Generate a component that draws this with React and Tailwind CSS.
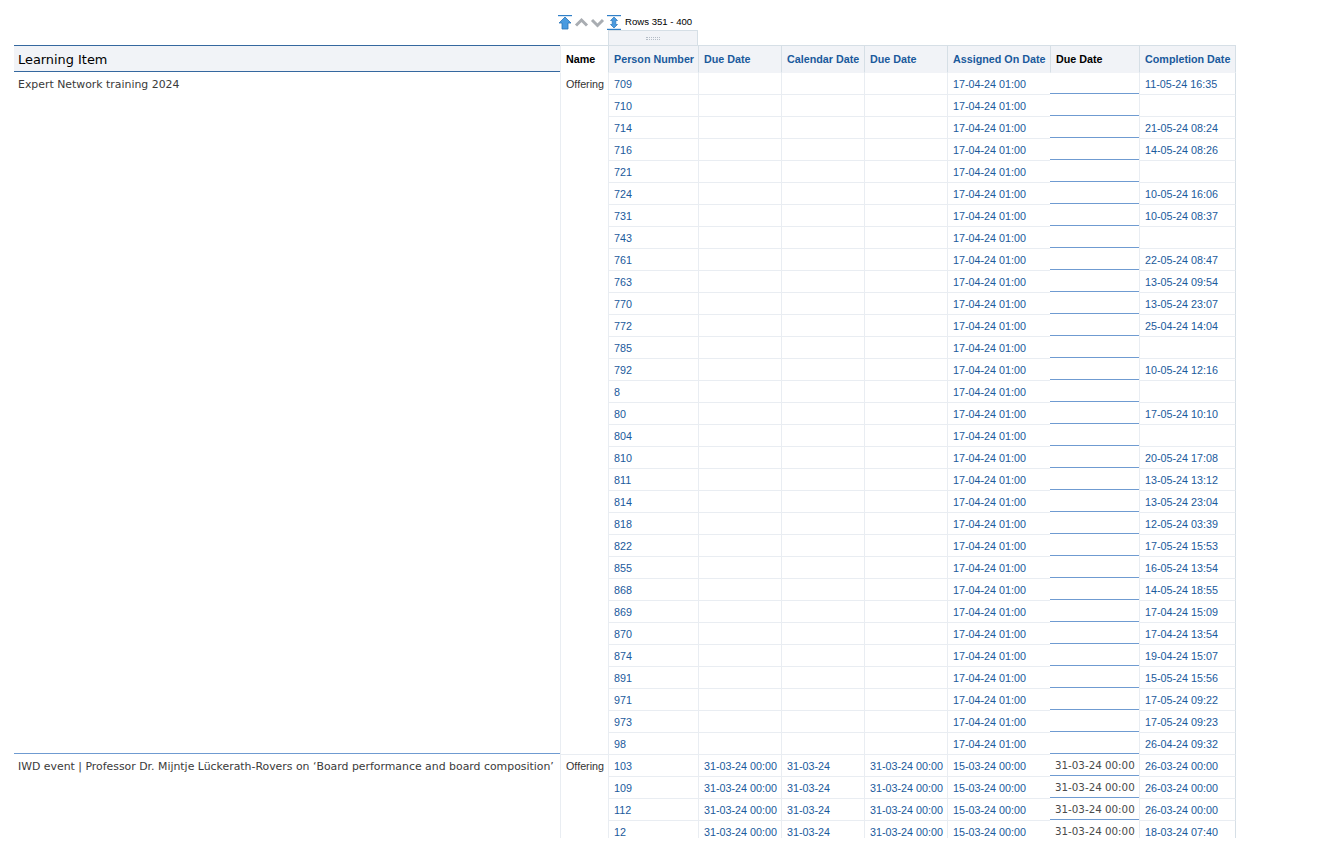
const expertRows = [
  ['709', '11-05-24 16:35'],
  ['710', ''],
  ['714', '21-05-24 08:24'],
  ['716', '14-05-24 08:26'],
  ['721', ''],
  ['724', '10-05-24 16:06'],
  ['731', '10-05-24 08:37'],
  ['743', ''],
  ['761', '22-05-24 08:47'],
  ['763', '13-05-24 09:54'],
  ['770', '13-05-24 23:07'],
  ['772', '25-04-24 14:04'],
  ['785', ''],
  ['792', '10-05-24 12:16'],
  ['8', ''],
  ['80', '17-05-24 10:10'],
  ['804', ''],
  ['810', '20-05-24 17:08'],
  ['811', '13-05-24 13:12'],
  ['814', '13-05-24 23:04'],
  ['818', '12-05-24 03:39'],
  ['822', '17-05-24 15:53'],
  ['855', '16-05-24 13:54'],
  ['868', '14-05-24 18:55'],
  ['869', '17-04-24 15:09'],
  ['870', '17-04-24 13:54'],
  ['874', '19-04-24 15:07'],
  ['891', '15-05-24 15:56'],
  ['971', '17-05-24 09:22'],
  ['973', '17-05-24 09:23'],
  ['98', '26-04-24 09:32'],
]

const iwdRows = [
  ['103', '26-03-24 00:00'],
  ['109', '26-03-24 00:00'],
  ['112', '26-03-24 00:00'],
  ['12', '18-03-24 07:40'],
]

const headCell = 'h-[28px] border-t border-b border-l border-[#d6dfe6] border-b-[#f1f3f7] bg-[#f1f3f7] px-[5px] text-left align-middle font-bold text-[#1a5a9c] whitespace-nowrap'
const dataCell = 'h-[22px] border-b border-l border-[#e9edf2] px-[5px] pt-[2px] text-left align-middle text-[#1a5a9c] whitespace-nowrap overflow-hidden'
const dueCell = 'h-[22px] border-b border-b-white pl-[5px] pr-0 text-left align-middle text-[#4a4a4a] whitespace-nowrap overflow-hidden shadow-[inset_0_-1px_0_#6f9bd1] font-["DejaVu_Sans",sans-serif] text-[10.3px]'
const groupCell = 'border-b border-b-white pl-[4px] pt-[4px] text-left align-top text-[#3a3a3a] whitespace-nowrap font-["DejaVu_Sans",sans-serif] text-[10.9px]'
const nameCell = 'border-b border-l border-[#e9edf2] pl-[5px] pt-[3px] align-top text-[#333333] whitespace-nowrap'

const TopIcon = () => (
  <svg width="14" height="15" viewBox="0 0 14 15">
    <rect x="0" y="0" width="14" height="1.2" fill="#2f7fc8" />
    <path d="M7 2 L13 8 H10 V14 H4 V8 H1 Z" fill="#4a9be0" stroke="#2a74b8" strokeWidth="0.8" />
  </svg>
)

const ChevronIcon = ({ down }) => (
  <svg width="15" height="15" viewBox="0 0 15 15">
    <path d={down ? 'M2 5 L7.5 10.5 L13 5' : 'M2 10.5 L7.5 5 L13 10.5'} fill="none" stroke="#a9adb2" strokeWidth="3" />
  </svg>
)

const ResizeIcon = () => (
  <svg width="14" height="15" viewBox="0 0 14 15">
    <rect x="0" y="0" width="14" height="1.2" fill="#2f7fc8" />
    <rect x="0" y="13.8" width="14" height="1.2" fill="#2f7fc8" />
    <path d="M7 2 L10.5 5.5 H8.8 V9.5 H10.5 L7 13 L3.5 9.5 H5.2 V5.5 H3.5 Z" fill="#4a9be0" stroke="#2a74b8" strokeWidth="0.7" />
  </svg>
)

const Row = ({ person, assigned, due, calendar, completion }) => (
  <>
    <td className={dataCell}>{person}</td>
    <td className={dataCell}>{due}</td>
    <td className={dataCell}>{calendar}</td>
    <td className={dataCell}>{due}</td>
    <td className={dataCell}>{assigned}</td>
    <td className={dueCell}>{due}</td>
    <td className={`${dataCell} border-r border-r-[#d6dfe6]`}>{completion}</td>
  </>
)

export default function App() {
  return (
    <div className="min-h-[851px] bg-white pl-[14px] pt-[14px] font-['Liberation_Sans',Arial,sans-serif] text-[10.75px]">
      {/* Pagination toolbar */}
      <div className="ml-[544px] flex h-[16px] items-center gap-[1.5px]">
        <TopIcon />
        <ChevronIcon />
        <ChevronIcon down />
        <ResizeIcon />
        <span className="ml-[3px] text-[9.6px] text-black">Rows 351 - 400</span>
      </div>

      {/* Column drag handle */}
      <div className="ml-[594px] flex h-[15px] w-[90px] items-center justify-center rounded-t-[1px] border-x border-t border-[#d6dfe6] bg-[#f1f3f7]">
        <div className="h-[3px] w-[14px] border-y border-dotted border-[#b4bcc6]" />
      </div>

      <div className="h-[793px] w-[1222px] overflow-hidden">
        <table className="w-[1222px] table-fixed border-separate border-spacing-0">
          <colgroup>
            <col className="w-[546px]" />
            <col className="w-[48px]" />
            <col className="w-[90px]" />
            <col className="w-[83px]" />
            <col className="w-[83px]" />
            <col className="w-[83px]" />
            <col className="w-[103px]" />
            <col className="w-[89px]" />
            <col className="w-[97px]" />
          </colgroup>
          <thead>
            <tr>
              <th className="h-[28px] border-t border-b border-t-[#35689f] border-b-white bg-[#f1f3f7] pl-[4px] pt-[2px] text-left align-middle font-['DejaVu_Sans',sans-serif] text-[12.9px] font-normal text-black shadow-[inset_0_-1px_0_#35689f]">
                Learning Item
              </th>
              <th className="h-[28px] border-t border-b border-l border-t-[#d6dfe6] border-b-white border-l-[#e9edf2] bg-white pl-[5px] text-left align-middle font-bold text-black">
                Name
              </th>
              <th className={headCell}>Person Number</th>
              <th className={headCell}>Due Date</th>
              <th className={headCell}>Calendar Date</th>
              <th className={headCell}>Due Date</th>
              <th className={headCell}>Assigned On Date</th>
              <th className={`${headCell} text-black`}>Due Date</th>
              <th className={`${headCell} border-r`}>Completion Date</th>
            </tr>
          </thead>
          <tbody>
            {expertRows.map(([person, completion], i) => (
              <tr key={person}>
                {i === 0 && (
                  <>
                    <td rowSpan={expertRows.length} className={`${groupCell} shadow-[inset_0_-1px_0_#6f9bd1]`}>
                      Expert Network training 2024
                    </td>
                    <td rowSpan={expertRows.length} className={nameCell}>Offering</td>
                  </>
                )}
                <Row person={person} assigned="17-04-24 01:00" due="" calendar="" completion={completion} />
              </tr>
            ))}
            {iwdRows.map(([person, completion], i) => (
              <tr key={person}>
                {i === 0 && (
                  <>
                    <td rowSpan={iwdRows.length} className={groupCell}>
                      IWD event | Professor Dr. Mijntje Lückerath-Rovers on ‘Board performance and board composition’
                    </td>
                    <td rowSpan={iwdRows.length} className={nameCell}>Offering</td>
                  </>
                )}
                <Row person={person} assigned="15-03-24 00:00" due="31-03-24 00:00" calendar="31-03-24" completion={completion} />
              </tr>
            ))}
          </tbody>
        </table>
      </div>
    </div>
  )
}
